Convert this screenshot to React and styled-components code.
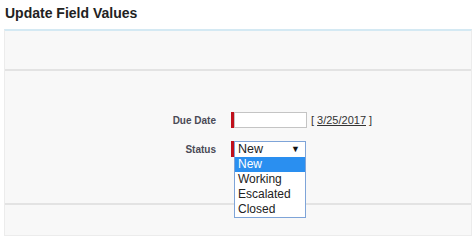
import React from "react";
import styled, { createGlobalStyle } from "styled-components";

const Global = createGlobalStyle`
  html, body { margin: 0; padding: 0; background: #fff; }
  body { font-family: "Liberation Sans", Arial, sans-serif; color: #222; }
`;

const Page = styled.div`
  width: 474px;
  height: 237px;
  overflow: hidden;
`;

const Title = styled.h2`
  margin: 0;
  padding: 4px 0 0 5px;
  height: 25px;
  box-sizing: border-box;
  font-size: 14px;
  font-weight: bold;
  color: #222;
  line-height: 18px;
`;

const Panel = styled.div`
  margin: 4px 2px 0 4px;
  border-top: 2px solid #d4e9f3;
  border-left: 1px solid #ececec;
  border-right: 1px solid #ececec;
  border-bottom: 1px solid #ececec;
  background: #f8f8f8;
`;

const Section = styled.div`
  height: ${(p) => p.$h}px;
  border-bottom: ${(p) => (p.$line ? "2px solid #e3e3e3" : "none")};
  box-sizing: border-box;
`;

const Form = styled.div`
  padding-top: 41px;
  display: flex;
  flex-direction: column;
  gap: 13px;
`;

const Row = styled.div`
  display: grid;
  grid-template-columns: 211px 15px auto;
  align-items: center;
  height: 16px;
`;

const Label = styled.div`
  text-align: right;
  font-size: 10px;
  font-weight: bold;
  color: #4a4a56;
`;

const Field = styled.div`
  display: flex;
  align-items: center;
  position: relative;
  height: 16px;
`;

const Required = styled.span`
  width: 3px;
  height: 16px;
  background: #c0101c;
`;

const TextInput = styled.div`
  width: 71px;
  height: 14px;
  border: 1px solid #c4c4c4;
  background: #fff;
`;

const DateLink = styled.span`
  margin-left: 4px;
  font-size: 11px;
  color: #333;
  a { color: #333; text-decoration: underline; margin: 0 3px; }
`;

const Select = styled.div`
  height: 15px;
  border: 1px solid #7ea4d8;
  background: #fff;
  display: flex;
  align-items: center;
  justify-content: space-between;
  padding: 0 5px 0 3px;
  width: 62px;
  font-size: 12.5px;
  color: #222;
`;

const Arrow = styled.span`
  font-size: 9px;
  color: #111;
`;

const List = styled.ul`
  position: absolute;
  top: 16px;
  left: 3px;
  margin: 0;
  padding: 0;
  list-style: none;
  width: 70px;
  border: 1px solid #7ea4d8;
  border-top: none;
  background: #fff;
  z-index: 2;
`;

const Option = styled.li`
  height: 15px;
  line-height: 15px;
  padding-left: 3px;
  font-size: 12px;
  color: ${(p) => (p.$active ? "#fff" : "#222")};
  background: ${(p) => (p.$active ? "#2a8ff0" : "transparent")};
`;

export default function App() {
  const options = ["New", "Working", "Escalated", "Closed"];
  return (
    <Page>
      <Global />
      <Title>Update Field Values</Title>
      <Panel>
        <Section $h={40} $line />
        <Section $h={134} $line>
          <Form>
            <Row>
              <Label>Due Date</Label>
              <span />
              <Field>
                <Required />
                <TextInput />
                <DateLink>
                  [<a>3/25/2017</a>]
                </DateLink>
              </Field>
            </Row>
            <Row>
              <Label>Status</Label>
              <span />
              <Field>
                <Required />
                <Select>
                  <span>New</span>
                  <Arrow>▼</Arrow>
                </Select>
                <List>
                  {options.map((o, i) => (
                    <Option key={o} $active={i === 0}>
                      {o}
                    </Option>
                  ))}
                </List>
              </Field>
            </Row>
          </Form>
        </Section>
        <Section $h={30} />
      </Panel>
    </Page>
  );
}
